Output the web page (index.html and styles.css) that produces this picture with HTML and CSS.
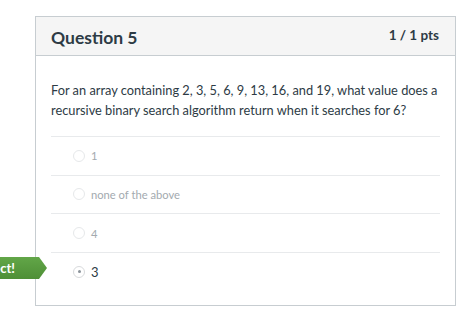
FILE: index.html
```html
<!DOCTYPE html>
<html>
<head>
<meta charset="utf-8">
<link rel="stylesheet" href="styles.css">
</head>
<body>
<div class="page">
  <div class="card">
    <div class="card-header">
      <span class="title">Question 5</span>
      <span class="pts">1 / 1 pts</span>
    </div>
    <div class="card-body">
      <p class="question">For an array containing 2, 3, 5, 6, 9, 13, 16, and 19, what value does a recursive binary search algorithm return when it searches for 6?</p>
      <div class="answers">
        <div class="answer"><span class="radio"></span><span class="label muted">1</span></div>
        <div class="answer"><span class="radio"></span><span class="label muted">none of the above</span></div>
        <div class="answer"><span class="radio"></span><span class="label muted">4</span></div>
        <div class="answer selected"><span class="radio checked"></span><span class="label">3</span>
          <div class="badge"><span class="badge-text">Correct!</span></div>
        </div>
      </div>
    </div>
  </div>
</div>
</body>
</html>
```
FILE: styles.css
```css
html, body {
  margin: 0;
  padding: 0;
  background: #ffffff;
}
body {
  font-family: Lato, "Open Sans", sans-serif;
  color: #2d3b45;
  width: 474px;
  height: 327px;
  overflow: hidden;
}
.page {
  padding: 16px 0 0 35px;
}
.card {
  width: 419px;
  height: 288px;
  border: 1px solid #c7cdd1;
  background: #fff;
}
.card-header {
  height: 38px;
  background: #f5f5f5;
  border-bottom: 1px solid #c7cdd1;
  display: flex;
  justify-content: space-between;
  padding: 0 16px 0 15px;
}
.title {
  font-weight: 700;
  font-size: 17.5px;
  line-height: 20px;
  padding-top: 11px;
  color: #2d3b45;
}
.pts {
  font-weight: 700;
  font-size: 13.5px;
  line-height: 16px;
  padding-top: 10px;
  color: #2d3b45;
}
.card-body {
  padding: 0 15px 0 15px;
}
.question {
  margin: 0;
  padding: 24px 0 0 0;
  font-size: 12.8px;
  line-height: 20px;
  height: 56px;
  color: #2d3b45;
}
.answers {
  display: flex;
  flex-direction: column;
}
.answer {
  height: 37.67px;
  border-top: 1px solid #e8eaec;
  display: flex;
  align-items: center;
  padding-left: 22px;
  position: relative;
}
.radio {
  width: 12px;
  height: 12px;
  border-radius: 50%;
  border: 1px solid #e6e8ea;
  box-sizing: border-box;
  margin-right: 6px;
  position: relative;
  background: #fff;
}
.radio.checked {
  border-color: #d8dadc;
}
.radio.checked::after {
  content: "";
  position: absolute;
  left: 3.5px;
  top: 3.5px;
  width: 3px;
  height: 3px;
  border-radius: 50%;
  background: #8a9299;
}
.label {
  font-size: 11.2px;
  color: #2d3b45;
}
.label.muted {
  color: #a3aaaf;
}
.selected .label {
  font-size: 13px;
  color: #2d3b45;
}
.badge {
  position: absolute;
  left: -51px;
  top: 4px;
  width: 47px;
  height: 22px;
  background: linear-gradient(#62a648, #4e8f36);
  clip-path: polygon(0 0, 39px 0, 47px 11px, 39px 22px, 0 22px);
  overflow: hidden;
  display: flex;
  justify-content: flex-end;
}
.badge-text {
  color: #fff;
  font-weight: 700;
  font-size: 13px;
  line-height: 22px;
  padding-right: 32px;
  white-space: nowrap;
}
```
